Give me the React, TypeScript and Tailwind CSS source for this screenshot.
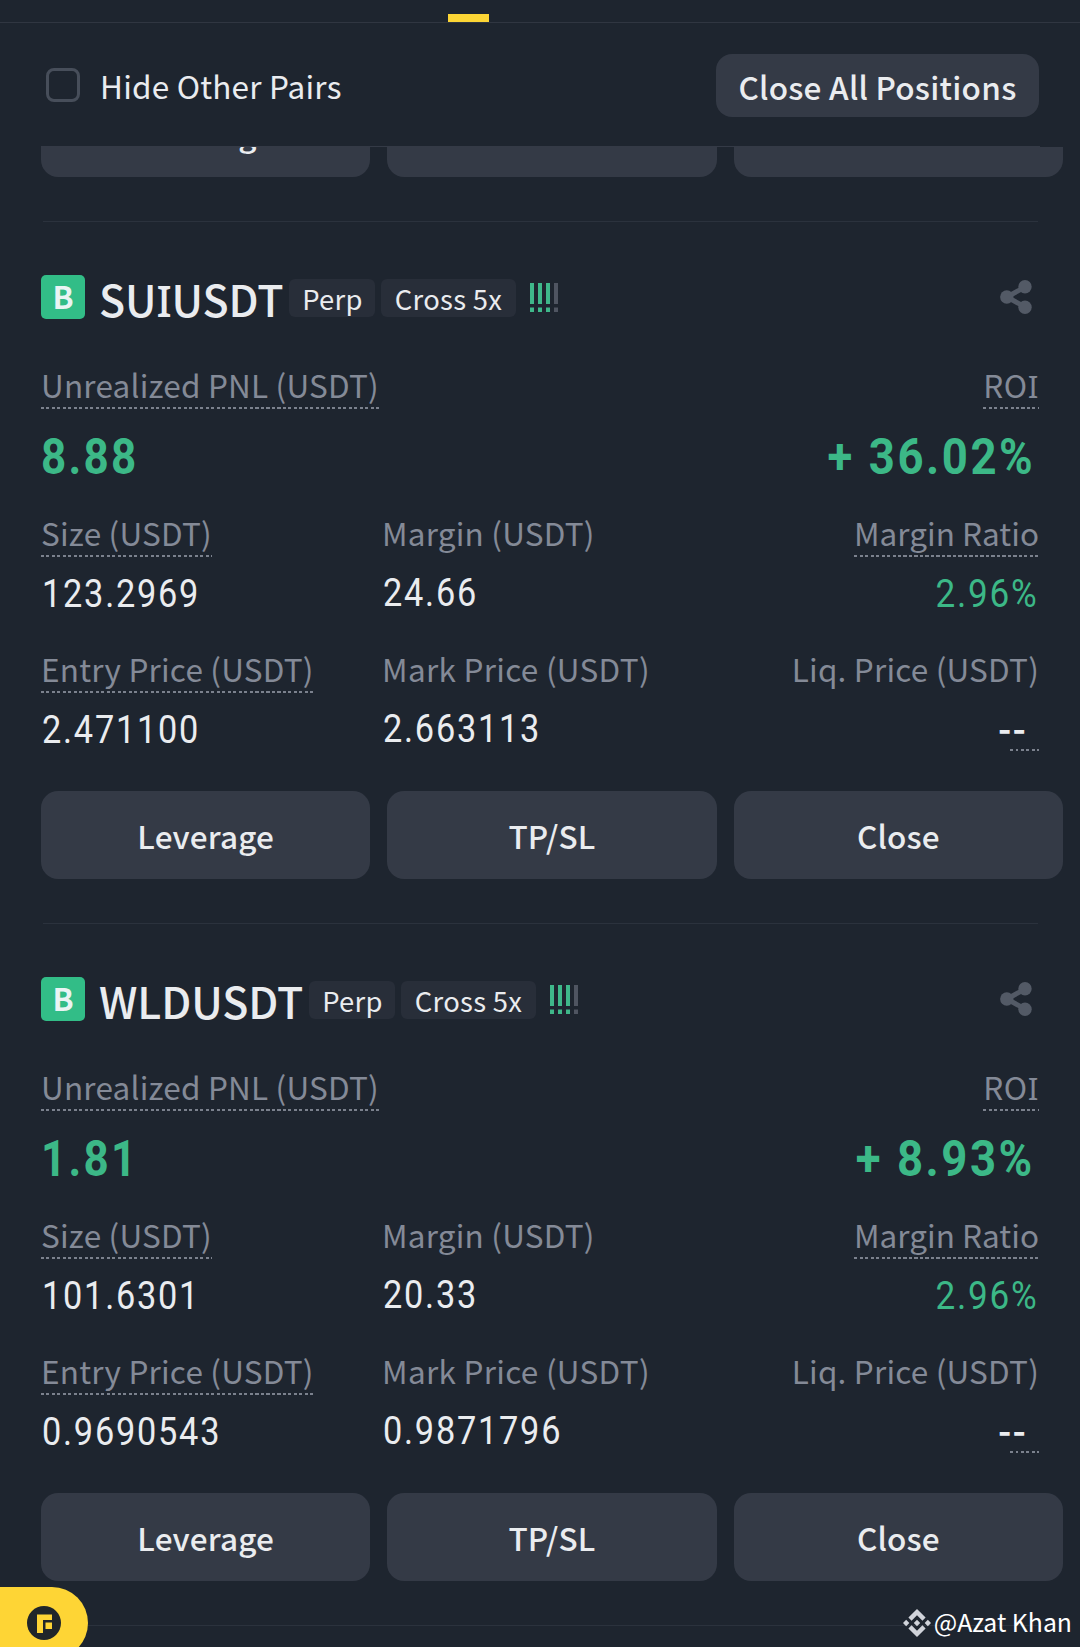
import React from 'react';

interface Position {
  symbol: React.ReactNode;
  symbolClass: string;
  pnl: string;
  roi: string;
  size: string;
  margin: string;
  marginRatio: string;
  entryPrice: string;
  markPrice: string;
}

const SerifI: React.FC = () => <span className="font-['Noto_Sans',sans-serif]">I</span>;

const positions: Position[] = [
  {
    symbol: <>SU<SerifI />USDT</>,
    symbolClass: 'w-[190px]',
    pnl: '8.88',
    roi: '36.02%',
    size: '123.2969',
    margin: '24.66',
    marginRatio: '2.96%',
    entryPrice: '2.471100',
    markPrice: '2.663113',
  },
  {
    symbol: 'WLDUSDT',
    symbolClass: 'w-[210px]',
    pnl: '1.81',
    roi: '8.93%',
    size: '101.6301',
    margin: '20.33',
    marginRatio: '2.96%',
    entryPrice: '0.9690543',
    markPrice: '0.9871796',
  },
];

const DashedLine: React.FC<{ className?: string }> = ({ className = 'w-full' }) => (
  <div
    className={`h-[1.5px] bg-[repeating-linear-gradient(90deg,#7b818d_0px,#7b818d_3px,transparent_3px,transparent_5.5px)] ${className}`}
  />
);

interface LabelProps {
  children: React.ReactNode;
  dashed?: boolean;
  className?: string;
}

const Label: React.FC<LabelProps> = ({ children, dashed, className = 'tracking-[0.2px]' }) => (
  <div className={`h-10 w-fit text-[31.5px] leading-none whitespace-nowrap text-[#848a97] ${className}`}>
    <div className="h-[38px]">{children}</div>
    {dashed && <DashedLine />}
  </div>
);

const Value: React.FC<{ children: React.ReactNode; className?: string }> = ({ children, className = '' }) => (
  <div
    className={`h-[39px] w-fit font-[Roboto,sans-serif] text-[39px] leading-none tracking-[2px] whitespace-nowrap ${className}`}
  >
    {children}
  </div>
);

const ActionButtons: React.FC<{ names?: string[] }> = ({ names = ['Leverage', 'TP/SL', 'Close'] }) => (
  <div className="flex w-[1022px] shrink-0 gap-[17px]">
    {names.map((name, i) => (
      <button
        key={i}
        className="h-[88px] flex-1 rounded-[17px] bg-[#343a46] pt-0.5 text-[31.5px] leading-none font-medium tracking-[0.15px] text-[#eaecef]"
      >
        {name}
      </button>
    ))}
  </div>
);

const SignalIcon: React.FC = () => (
  <svg width="28" height="29" viewBox="0 0 28 29" className="mt-2 ml-3.5">
    {[0, 8, 16, 24].map(x => (
      <g key={x} fill={x === 24 ? '#4f5561' : '#3fb88a'}>
        <rect x={x} y="0" width="4" height="21" />
        <rect x={x} y="24.5" width="4" height="4.5" />
      </g>
    ))}
  </svg>
);

const ShareIcon: React.FC = () => (
  <svg width="32" height="34" viewBox="0 0 32 34" className="mt-[5px] mr-[7px] ml-auto" fill="#535a66">
    <path d="M25 7 7 17 25 27" fill="none" stroke="#535a66" strokeWidth="5" />
    <circle cx="25" cy="6.8" r="6.7" />
    <circle cx="6.8" cy="17" r="6.7" />
    <circle cx="25" cy="27.2" r="6.7" />
  </svg>
);

const Chip: React.FC<{ children: React.ReactNode; className: string }> = ({ children, className }) => (
  <span
    className={`mt-1 h-[38px] rounded-md bg-[#282e39] pt-1.5 text-center text-[27.4px] leading-none tracking-[0.3px] text-[#eaecef] ${className}`}
  >
    {children}
  </span>
);

const PositionCard: React.FC<{ position: Position }> = ({ position }) => (
  <section className="h-[702px]">
    <div className="mr-px ml-0.5 h-px bg-[#2b323d]" />
    <div className="flex h-[97px] items-start pt-[53px]">
      <span className="h-11 w-11 rounded-[5px] bg-[#32bd87] pt-[5px] text-center text-[31px] leading-none font-bold text-[#eaf4f4]">
        B
      </span>
      <h2
        className={`ml-3.5 pt-0.5 text-[43px] leading-none font-medium tracking-[-0.1px] whitespace-nowrap text-[#eaecef] ${position.symbolClass}`}
      >
        {position.symbol}
      </h2>
      <Chip className="w-[86px] pl-px">Perp</Chip>
      <Chip className="ml-1.5 w-[135px]">Cross 5x</Chip>
      <SignalIcon />
      <ShareIcon />
    </div>

    <div className="mt-[50px] flex justify-between">
      <Label dashed>Unrealized PNL (USDT)</Label>
      <Label dashed className="pl-px tracking-[0.6px]">RO<SerifI /></Label>
    </div>
    <div className="mt-[22.5px] flex h-[50px] justify-between font-[Roboto,sans-serif] text-[50px] leading-none font-bold text-[#3cb887]">
      <div className="origin-left scale-x-[0.88] tracking-[2.6px]">{position.pnl}</div>
      <div className="mr-1 origin-right scale-x-[0.91] tracking-[2.8px] whitespace-nowrap">+ {position.roi}</div>
    </div>

    <div className="mt-[35.5px] grid grid-cols-[341px_341px_1fr]">
      <div>
        <Label dashed>Size (USDT)</Label>
        <Value className="mt-[18px] ml-px origin-left scale-x-[0.88] text-[#eaecef]">{position.size}</Value>
      </div>
      <div>
        <Label>Margin (USDT)</Label>
        <Value className="mt-[17px] ml-px origin-left scale-x-[0.88] text-[#eaecef]">{position.margin}</Value>
      </div>
      <div className="flex flex-col items-end">
        <Label dashed className="tracking-[0.03px]">Margin Ratio</Label>
        <Value className="mt-[18px] origin-right scale-x-[0.9] text-[#3cb887]">{position.marginRatio}</Value>
      </div>
    </div>

    <div className="mt-[39px] grid grid-cols-[341px_341px_1fr]">
      <div>
        <Label dashed>Entry Price (USDT)</Label>
        <Value className="mt-[18px] ml-px origin-left scale-x-[0.88] text-[#eaecef]">{position.entryPrice}</Value>
      </div>
      <div>
        <Label className="tracking-[0.3px]">Mark Price (USDT)</Label>
        <Value className="mt-[17px] ml-px origin-left scale-x-[0.88] text-[#eaecef]">{position.markPrice}</Value>
      </div>
      <div className="flex flex-col items-end">
        <Label>Liq. Price (USDT)</Label>
        <div className="mt-[15px] mr-3 h-[41px] text-[36px] leading-none font-bold tracking-[1.2px] text-[#eaecef]">--</div>
        <DashedLine className="w-[29px]" />
      </div>
    </div>

    <div className="mt-[40.5px]">
      <ActionButtons />
    </div>
  </section>
);

export default function App() {
  return (
    <main className="relative h-[1647px] w-[1080px] overflow-hidden bg-[#1e252f] font-['Noto_Sans_CJK_SC','Noto_Sans',sans-serif]">
      <div className="flex h-[23px] items-end border-b border-[#303641] pl-[448px]">
        <div className="h-[8.5px] w-[41px] bg-[#fcd535]" />
      </div>

      <header className="mr-10 ml-[41px] flex h-[124px] items-start border-b border-[#343a46]">
        <div className="mt-[45px] ml-[5px] h-[34px] w-[34px] rounded-lg border-[3px] border-[#474e5a]" />
        <span className="mt-[47px] ml-5 text-[31.5px] leading-none tracking-[0.2px] text-[#eaecef]">
          Hide Other Pairs
        </span>
        <button className="mt-[31px] mr-px ml-auto h-[63px] w-[323px] rounded-[16px] bg-[#343a46] pt-0.5 text-[31.5px] leading-none font-medium tracking-[0.25px] text-[#eaecef]">
          Close All Positions
        </button>
      </header>

      <div className="pr-[41px] pl-[41px]">
        {/* tail of the card scrolled under the header */}
        <div className="mb-11 flex h-[30px] items-end overflow-x-visible overflow-y-clip">
          <ActionButtons names={['Leverage', '', '']} />
        </div>
        {positions.map(position => (
          <PositionCard key={position.size} position={position} />
        ))}
        <div className="mr-px ml-0.5 h-px bg-[#2b323d]" />
      </div>

      <div className="absolute top-[1587px] left-0 h-[72px] w-[88px] rounded-r-[36px] bg-[#fed535]">
        <svg width="34" height="34" viewBox="0 0 34 34" className="mt-[19px] ml-[27px]">
          <circle cx="17" cy="17" r="17" fill="#20262a" />
          <path d="M10 8.5H25V14H16V27H10Z" fill="#fed535" />
          <rect x="18.5" y="16.5" width="6.5" height="6.5" fill="#fed535" />
        </svg>
      </div>

      <div className="absolute top-[1609px] right-[8px] flex items-start gap-[3px]">
        <svg width="28" height="28" viewBox="0 0 126.61 126.61" fill="#d0d3da">
          <path d="M38.73 53.2 63.31 28.62 87.9 53.21 102.2 38.91 63.31 0 24.43 38.9ZM0 63.31 14.3 49 28.6 63.31 14.3 77.61ZM38.73 73.41 63.31 98 87.9 73.4 102.21 87.69 63.31 126.61 24.43 87.71ZM98 63.31 112.3 49 126.61 63.3 112.31 77.61ZM77.83 63.3 63.31 48.78 48.79 63.29 63.31 77.82Z" />
        </svg>
        <span className="text-[24.8px] leading-none text-white">@Azat Khan</span>
      </div>
    </main>
  );
}
